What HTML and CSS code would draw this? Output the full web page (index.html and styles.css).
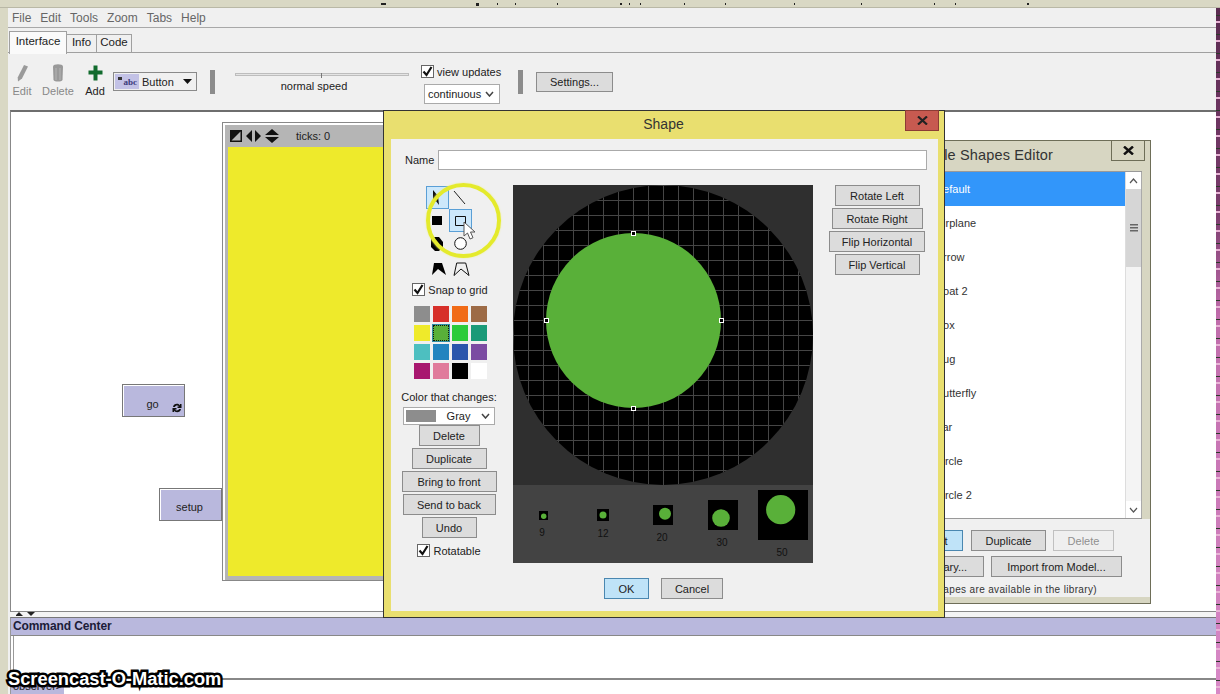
FILE: index.html
```html
<!DOCTYPE html>
<html lang="en">
<head>
    <meta charset="UTF-8">
    <title>Shape</title>
    <link rel="stylesheet" href="styles.css">
</head>
<body>
<div class="app">
    <!-- bottoms of the title bar text, the rest is off screen -->
    <div class="titlebar">
        <svg width="1220" height="8" fill="#222">
            <rect x="381" y="0" width="5" height="2"/><rect x="476" y="0" width="3" height="3"/><rect x="497" y="0" width="1" height="2"/>
            <rect x="515" y="0" width="1" height="2"/><rect x="557" y="0" width="1" height="2"/><rect x="620" y="0" width="2" height="2"/>
            <rect x="629" y="0" width="1" height="2"/><rect x="640" y="0" width="1" height="2"/><rect x="684" y="0" width="1" height="2"/>
            <rect x="725" y="0" width="1" height="2"/><rect x="794" y="0" width="1" height="2"/><rect x="861" y="0" width="1" height="2"/>
            <rect x="934" y="0" width="1" height="2"/><rect x="955" y="0" width="1" height="2"/><rect x="1027" y="0" width="2" height="2"/>
        </svg>
    </div>
    <div class="main">
        <div class="menubar">
            <span>File</span><span>Edit</span><span>Tools</span><span>Zoom</span><span>Tabs</span><span>Help</span>
        </div>
        <div class="tabs">
            <div class="tab active">Interface</div>
            <div class="tab tab-info">Info</div>
            <div class="tab tab-code">Code</div>
        </div>
        <div class="toolbar">
            <div class="tool tool-edit">
                <svg width="14" height="18" viewBox="0 0 14 18"><path d="M9 1l4 1.500-6 12-4 3-.3-4z" fill="#9a9a9a"/></svg>
                <span>Edit</span>
            </div>
            <div class="tool tool-delete">
                <svg width="14" height="18" viewBox="0 0 14 18"><path d="M2 2.500c0-3 10-3 10 0l-.5 13.500c-1 2-8 2-9 0z" fill="#999"/><path d="M5 4v12M9 4v12" stroke="#b5b5b5"/></svg>
                <span>Delete</span>
            </div>
            <div class="tool tool-add">
                <svg width="15" height="18" viewBox="0 0 15 18"><path d="M5.500 1.500h4v5h5v4h-5v6h-4v-6h-5v-4h5z" fill="#116b2d"/></svg>
                <span class="dark">Add</span>
            </div>
            <div class="widget-select">
                <span class="abc"><i>abc</i></span>
                <span class="widget-name">Button</span>
                <svg width="9" height="5"><path d="M0 0h9l-4.500 5z" fill="#111"/></svg>
            </div>
            <div class="separator sep-a"></div>
            <div class="speed">
                <div class="track"><span class="thumb"></span></div>
                <div class="speed-label">normal speed</div>
            </div>
            <div class="updates">
                <label class="check">
                    <span class="box"><svg width="11" height="11" viewBox="0 0 11 11"><path d="M1.500 5.500l3 3.500 5-8" fill="none" stroke="#111" stroke-width="2.200"/></svg></span>
                    view updates
                </label>
                <div class="dropdown continuous">
                    <span>continuous</span>
                    <svg width="9" height="6"><path d="M1 1l3.500 4 3.500-4" fill="none" stroke="#444" stroke-width="1.500"/></svg>
                </div>
            </div>
            <div class="separator sep-b"></div>
            <button class="btn settings">Settings...</button>
        </div>
        <div class="workspace"></div>
        <div class="splitter">
            <svg width="26" height="5"><path d="M3 0l4 4h-8zM11 0h8l-4 4z" fill="#222"/></svg>
        </div>
        <div class="command">
            <div class="command-title">Command Center</div>
            <div class="command-body"></div>
            <div class="command-input"><span class="observer">observer&gt;</span></div>
        </div>
    </div>
    <div class="stripes"></div>

    <div class="nl-button go">
        go
        <svg class="forever" width="10" height="10" viewBox="0 0 10 10"><path d="M1 4c.5-4 6-4 7-1.500V1l1.500 0v4H5.500V3.500h1.500C6 2 3.500 2.300 3 4zM9 6c-.5 4-6 4-7 1.500V9H.5V5h4v1.500H3C4 8 6.500 7.700 7 6z" fill="#111"/></svg>
    </div>
    <div class="nl-button setup">setup</div>

    <div class="world">
        <div class="world-inner">
            <div class="world-head">
                <svg width="54" height="14" viewBox="0 0 54 14" fill="#111">
                    <path d="M0 1h12v12H0z"/><path d="M10.500 2.500v9h-9z" fill="#b5b5b5"/>
                    <path d="M22 1v12l-6-6zM25 1v12l6-6zM42 0l7 6H35zM42 14l7-6H35z"/>
                </svg>
                <span class="ticks">ticks: 0</span>
            </div>
            <div class="world-view"></div>
        </div>
    </div>

    <div class="editor">
        <div class="editor-head">
            <span class="editor-title">Turtle Shapes Editor</span>
            <span class="close plain"><svg width="11" height="9" viewBox="0 0 11 9"><path d="M1 .5l9 8M10 .5l-9 8" stroke="#111" stroke-width="2.400"/></svg></span>
        </div>
        <div class="editor-list">
            <ul class="shape-list">
                <li class="selected">default</li>
                <li>airplane</li>
                <li>arrow</li>
                <li>boat 2</li>
                <li>box</li>
                <li>bug</li>
                <li>butterfly</li>
                <li>car</li>
                <li>circle</li>
                <li>circle 2</li>
            </ul>
            <div class="scrollbar">
                <span class="arrow"><svg width="9" height="6"><path d="M1 5l3.500-4 3.500 4" fill="none" stroke="#555" stroke-width="1.200"/></svg></span>
                <span class="scroll-thumb"><svg width="8" height="8" fill="#666"><path d="M0 0h8v1.500H0zM0 3h8v1.500H0zM0 6h8v1.500H0z"/></svg></span>
                <span class="scroll-space"></span>
                <span class="arrow"><svg width="9" height="6"><path d="M1 1l3.500 4 3.500-4" fill="none" stroke="#555" stroke-width="1.200"/></svg></span>
            </div>
        </div>
        <div class="editor-foot">
            <div class="editor-row row-one">
                <button class="btn primary edit-btn">Edit</button>
                <button class="btn duplicate-btn">Duplicate</button>
                <button class="btn disabled delete-btn">Delete</button>
            </div>
            <div class="editor-row row-two">
                <button class="btn library-btn">Import from Library...</button>
                <button class="btn model-btn">Import from Model...</button>
            </div>
            <div class="editor-note">(Shapes are available in the library)</div>
        </div>
    </div>

    <div class="dialog">
        <div class="dialog-head">
            Shape
            <span class="close red"><svg width="11" height="9" viewBox="0 0 11 9"><path d="M1 .5l9 8M10 .5l-9 8" stroke="#222" stroke-width="2.200"/></svg></span>
        </div>
        <div class="dialog-body">
            <div class="name-row">
                <label>Name</label>
                <input class="name-input" type="text">
            </div>
            <div class="editor-main">
                <div class="left-col">
                    <div class="shape-tools">
                        <span class="shape-tool on"><svg width="21" height="21"><path d="M6 3l5 6 1 9-3-4-3 2z" fill="#111"/></svg></span>
                        <span class="shape-tool"><svg width="21" height="21"><path d="M4 4l11 13" stroke="#222"/></svg></span>
                        <span class="shape-tool"><svg width="21" height="21"><path d="M5 6h10v9H5z" fill="#000"/></svg></span>
                        <span class="shape-tool on"><svg width="21" height="21"><path d="M5.500 6.500h10v9h-10z" fill="none" stroke="#111"/></svg></span>
                        <span class="shape-tool"><svg width="21" height="21"><path d="M4 4h8l4 5v5l-4 4H8l-4-4z" fill="#000"/></svg></span>
                        <span class="shape-tool"><svg width="21" height="21"><circle cx="10.500" cy="10.500" r="5.800" fill="#fff" stroke="#111"/></svg></span>
                        <span class="shape-tool"><svg width="21" height="21"><path d="M7 6h8l4 12-8-6-6 6z" fill="#000"/></svg></span>
                        <span class="shape-tool"><svg width="21" height="21"><path d="M6.700 6h9l3.300 12.500-8-6.500-7 6.500z" fill="none" stroke="#111"/></svg></span>
                    </div>
                    <label class="check snap">
                        <span class="box"><svg width="11" height="11" viewBox="0 0 11 11"><path d="M1.500 5.500l3 3.500 5-8" fill="none" stroke="#111" stroke-width="2.200"/></svg></span>
                        Snap to grid
                    </label>
                    <div class="palette">
                        <span class="c-gray"></span><span class="c-red"></span><span class="c-orange"></span><span class="c-brown"></span>
                        <span class="c-yellow"></span><span class="c-green picked"></span><span class="c-lime"></span><span class="c-turq"></span>
                        <span class="c-cyan"></span><span class="c-sky"></span><span class="c-blue"></span><span class="c-violet"></span>
                        <span class="c-magenta"></span><span class="c-pink"></span><span class="c-black"></span><span class="c-white"></span>
                    </div>
                    <div class="change-label">Color that changes:</div>
                    <div class="dropdown color-select">
                        <span class="swatch"></span>
                        <span class="color-name">Gray</span>
                        <svg width="9" height="6"><path d="M1 1l3.500 4 3.500-4" fill="none" stroke="#444" stroke-width="1.500"/></svg>
                    </div>
                    <div class="action-stack">
                        <button class="btn w-delete">Delete</button>
                        <button class="btn w-duplicate">Duplicate</button>
                        <button class="btn w-front">Bring to front</button>
                        <button class="btn w-back">Send to back</button>
                        <button class="btn w-undo">Undo</button>
                    </div>
                    <label class="check rotatable">
                        <span class="box"><svg width="11" height="11" viewBox="0 0 11 11"><path d="M1.500 5.500l3 3.500 5-8" fill="none" stroke="#111" stroke-width="2.200"/></svg></span>
                        Rotatable
                    </label>
                </div>
                <svg class="drawing" width="300" height="378" viewBox="0 0 300 378">
                    <defs>
                        <clipPath id="disc"><circle cx="150" cy="150" r="150"/></clipPath>
                        <pattern id="grid" width="15" height="15" patternUnits="userSpaceOnUse">
                            <path d="M.5 0v15M0 .5h15" stroke="#454545" fill="none"/>
                        </pattern>
                    </defs>
                    <rect width="300" height="300" fill="#2f2f2f"/>
                    <circle cx="150" cy="150" r="150" fill="#000"/>
                    <rect width="300" height="300" fill="url(#grid)" clip-path="url(#disc)"/>
                    <circle cx="120.500" cy="135.500" r="87.500" fill="#59b039"/>
                    <g fill="#000" stroke="#fff" stroke-width="1">
                        <rect x="118.500" y="46.500" width="4" height="4"/>
                        <rect x="31.500" y="133.500" width="4" height="4"/>
                        <rect x="206.500" y="133.500" width="4" height="4"/>
                        <rect x="118.500" y="221.500" width="4" height="4"/>
                    </g>
                    <rect y="300" width="300" height="78" fill="#434343"/>
                    <rect x="26" y="326" width="9" height="9" fill="#000"/><circle cx="30.700" cy="331.300" r="2.700" fill="#59b039"/>
                    <rect x="84" y="324" width="12" height="12" fill="#000"/><circle cx="90" cy="330" r="3.500" fill="#59b039"/>
                    <rect x="140" y="320" width="20" height="20" fill="#000"/><circle cx="152" cy="328.700" r="6" fill="#59b039"/>
                    <rect x="195" y="315" width="30" height="30" fill="#000"/><circle cx="208" cy="333" r="8.800" fill="#59b039"/>
                    <rect x="245" y="305" width="50" height="50" fill="#000"/><circle cx="267.700" cy="324.700" r="14.600" fill="#59b039"/>
                    <g class="size-labels" text-anchor="middle">
                        <text x="29" y="351">9</text>
                        <text x="90" y="352">12</text>
                        <text x="149" y="356">20</text>
                        <text x="209" y="361">30</text>
                        <text x="269" y="371">50</text>
                    </g>
                </svg>
                <div class="right-col">
                    <button class="btn w-rot-left">Rotate Left</button>
                    <button class="btn w-rot-right">Rotate Right</button>
                    <button class="btn w-flip-h">Flip Horizontal</button>
                    <button class="btn w-flip-v">Flip Vertical</button>
                </div>
            </div>
            <div class="dialog-foot">
                <button class="btn primary ok">OK</button>
                <button class="btn cancel">Cancel</button>
            </div>
        </div>
        <div class="spotlight"></div>
        <svg class="cursor" width="14" height="20" viewBox="0 0 14 20"><path d="M1 1v14l3.500-3 2.500 6 3-1.300-2.500-5.700H12z" fill="#fff" stroke="#555"/></svg>
    </div>

    <div class="watermark">Screencast-O-Matic.com</div>
</div>
</body>
</html>
```

FILE: styles.css
```css
* {
    box-sizing: border-box;
    margin: 0;
    padding: 0;
}

body {
    font-family: "Liberation Sans", Arial, sans-serif;
    font-size: 12px;
    color: #222;
    background-color: #d9d8c4;
}

.app {
    position: relative;
    width: 1220px;
    height: 694px;
    overflow: hidden;
    display: grid;
    grid-template-columns: 8px 1fr 4px;
    grid-template-rows: 8px 1fr;
    background-color: #d9d8c4;
}

.titlebar {
    grid-column: 1 / 4;
    height: 8px;
    border-bottom: 1px solid #b9b8a6;
}

.main {
    grid-column: 2;
    grid-row: 2;
    display: flex;
    flex-direction: column;
    min-height: 0;
    background-color: #f0f0f0;
}

.stripes {
    grid-column: 3;
    grid-row: 2;
    background-color: #7c3d6e;
    background-image:
        repeating-linear-gradient(180deg, transparent 0 7px, #2c3a2a 7px 8px, transparent 8px 13px, #e9b3d6 13px 15px, transparent 15px 19px),
        linear-gradient(180deg, #5a2b50 0, #7c3d6e 30%, #c06cab 45%, #d889c6 100%);
}

/* menu and tabs */
.menubar {
    height: 20px;
    display: flex;
    align-items: center;
    gap: 9px;
    padding-left: 4px;
    color: #666;
    border-bottom: 1px solid #a8a8a8;
}

.tabs {
    height: 25px;
    display: flex;
    align-items: flex-end;
    padding-left: 1px;
    border-bottom: 1px solid #a0a0a0;
    font-size: 11.500px;
}

.tab {
    height: 19px;
    padding-top: 1px;
    margin-bottom: -1px;
    text-align: center;
    background-color: #f0f0f0;
    border: 1px solid #a0a0a0;
    border-left: 0;
}

.tab-info {
    width: 30px;
}

.tab-code {
    width: 35px;
}

.tab.active {
    height: 23px;
    width: 58px;
    padding-top: 3px;
    margin-bottom: -2px;
    background-color: #fafafa;
    border-left: 1px solid #a0a0a0;
    border-bottom: 0;
    position: relative;
}

/* toolbar */
.toolbar {
    height: 57px;
    display: flex;
    align-items: flex-start;
    flex-shrink: 0;
    font-size: 11px;
}

.tool {
    display: flex;
    flex-direction: column;
    align-items: center;
    color: #888;
    margin-top: 11px;
    line-height: 14px;
}

.tool svg {
    margin-bottom: 2px;
}

.tool .dark {
    color: #222;
}

.tool-edit {
    width: 20px;
    margin-left: 4px;
}

.tool-delete {
    width: 32px;
    margin-left: 10px;
}

.tool-add {
    width: 20px;
    margin-left: 11px;
}

.widget-select {
    width: 84px;
    height: 19px;
    margin: 19px 0 0 8px;
    display: flex;
    align-items: center;
    border: 1px solid #8a8a8a;
    background-color: #f0f0f0;
    padding: 1px;
}

.abc {
    width: 24px;
    height: 15px;
    background-color: #c3c2e6;
    text-align: right;
    padding: 3px 2px 0 0;
    position: relative;
}

.abc::before {
    content: "";
    position: absolute;
    left: 3px;
    top: 3px;
    width: 4px;
    height: 3px;
    background-color: #333;
}

.abc i {
    display: block;
    font: bold 9px/11px "Liberation Serif", serif;
    color: #3b3b7a;
}

.widget-name {
    flex: 1;
    padding-left: 3px;
}

.widget-select svg {
    margin-right: 3px;
}

.separator {
    width: 5px;
    height: 24px;
    margin-top: 17px;
    background-color: #8c8c8c;
}

.sep-a {
    margin-left: 13px;
}

.sep-b {
    margin-left: 17px;
}

.speed {
    width: 174px;
    margin: 20px 0 0 20px;
}

.track {
    position: relative;
    height: 3px;
    background-color: #e4e4e4;
    border: 1px solid #bdbdbd;
}

.thumb {
    position: absolute;
    left: 85px;
    top: -1px;
    width: 1px;
    height: 5px;
    background-color: #777;
}

.speed-label {
    margin-top: 2px;
    padding-right: 16px;
    text-align: center;
    line-height: 16px;
}

.updates {
    width: 80px;
    margin: 11px 0 0 12px;
}

.check {
    display: flex;
    align-items: center;
    gap: 3px;
    height: 15px;
    white-space: nowrap;
}

.box {
    width: 13px;
    height: 13px;
    flex-shrink: 0;
    display: flex;
    align-items: center;
    justify-content: center;
    background-color: #fff;
    border: 1px solid #666;
}

.dropdown {
    display: flex;
    align-items: center;
    background-color: #fff;
    border: 1px solid #aaa;
}

.continuous {
    width: 76px;
    height: 20px;
    margin: 5px 0 0 3px;
    padding: 0 5px 0 3px;
    justify-content: space-between;
}

.btn {
    display: block;
    font: 11px "Liberation Sans", Arial, sans-serif;
    color: #222;
    background-color: #dcdcdc;
    border: 1px solid #8c8c8c;
    white-space: nowrap;
}

.btn.primary {
    background-color: #bfe3f8;
    border-color: #4a87b0;
}

.btn.disabled {
    background-color: #efefef;
    border-color: #c0c0c0;
    color: #8f8f8f;
}

.settings {
    width: 77px;
    height: 20px;
    margin: 19px 0 0 13px;
}

/* interface area */
.workspace {
    flex: 1;
    margin-left: 2px;
    background-color: #fff;
    border: 1px solid #888;
    border-top: 2px solid #6e6e6e;
    border-right: 0;
}

.splitter {
    height: 5px;
    margin-left: 2px;
    background-color: #f4f4f4;
    padding-left: 6px;
    line-height: 0;
}

.command {
    height: 77px;
    margin-left: 2px;
    background-color: #fff;
    border-top: 1px solid #777;
    border-left: 1px solid #999;
}

.command-title {
    height: 18px;
    padding-left: 2px;
    font-weight: bold;
    letter-spacing: -.1px;
    line-height: 17px;
    color: #1c1c38;
    background-color: #b9b8dd;
    border-bottom: 1px solid #888;
}

.command-body {
    height: 44px;
    margin-left: 2px;
    border-left: 1px solid #999;
    border-bottom: 2px solid #888;
}

.command-input {
    height: 14px;
}

.observer {
    display: block;
    width: 53px;
    height: 14px;
    font-size: 11px;
    background-color: #b9b8dd;
    padding-left: 2px;
}

/* widgets on the interface */
.nl-button {
    position: absolute;
    width: 63px;
    height: 33px;
    display: flex;
    align-items: center;
    justify-content: center;
    font-size: 11px;
    padding-top: 6px;
    background-color: #b9b8dd;
    border: 1px solid #777;
    box-shadow: inset 1px 1px 0 #fff;
}

.go {
    left: 122px;
    top: 384px;
    padding-right: 2px;
}

.forever {
    position: absolute;
    right: 2px;
    bottom: 3px;
}

.setup {
    left: 159px;
    top: 488px;
    padding-top: 4px;
    padding-right: 2px;
}

.world {
    position: absolute;
    left: 222px;
    top: 122px;
    width: 200px;
    height: 459px;
    background-color: #fff;
    border: 1px solid #888;
    padding: 2px 0 0 2px;
}

.world-inner {
    height: 100%;
    background-color: #b5b5b5;
    padding: 0 0 4px 3px;
    display: flex;
    flex-direction: column;
}

.world-head {
    height: 22px;
    display: flex;
    align-items: center;
    padding-left: 2px;
}

.ticks {
    margin-left: 12px;
    font-size: 11px;
}

.world-view {
    flex: 1;
    background-color: #eeea2b;
}

/* shapes editor behind the dialog */
.editor {
    position: absolute;
    left: 800px;
    top: 140px;
    width: 351px;
    height: 464px;
    display: flex;
    flex-direction: column;
    background-color: #d7d6c2;
    border: 1px solid #6e6e58;
    padding-bottom: 6px;
}

.editor-head {
    height: 30px;
    display: flex;
    justify-content: flex-end;
    align-items: flex-start;
    padding-right: 5px;
    flex-shrink: 0;
}

.editor-title {
    margin: 5px 58px 0 0;
    font-size: 14.500px;
    letter-spacing: .15px;
    line-height: 19px;
    color: #333;
}

.close {
    width: 34px;
    height: 21px;
    display: flex;
    align-items: center;
    justify-content: center;
}

.close.plain {
    margin-top: -1px;
    border: 1px solid #6e6e58;
}

.editor-list {
    height: 348px;
    display: flex;
    margin-right: 8px;
    background-color: #fff;
    border-top: 1px solid #999;
    border-bottom: 1px solid #999;
    flex-shrink: 0;
}

.shape-list {
    flex: 1;
    list-style: none;
    font-size: 11px;
}

.shape-list li {
    height: 34px;
    line-height: 34px;
    padding-left: 136px;
    color: #333;
}

.shape-list .selected {
    background-color: #3296fa;
    color: #fff;
}

.scrollbar {
    width: 17px;
    display: flex;
    flex-direction: column;
    border-left: 1px solid #ddd;
    border-right: 1px solid #aaa;
}

.arrow {
    height: 17px;
    display: flex;
    align-items: center;
    justify-content: center;
    background-color: #fff;
    flex-shrink: 0;
}

.scroll-thumb {
    height: 78px;
    display: flex;
    align-items: center;
    justify-content: center;
    background-color: #d6d6d6;
}

.scroll-space {
    flex: 1;
    background-color: #f4f4f4;
}

.editor-foot {
    flex: 1;
    background-color: #f0f0f0;
}

.editor-row {
    display: flex;
    justify-content: flex-end;
    gap: 7px;
}

.row-one {
    padding: 11px 36px 0 0;
}

.row-one .btn {
    height: 21px;
}

.edit-btn {
    width: 50px;
    margin-right: 1px;
}

.duplicate-btn {
    width: 75px;
}

.delete-btn {
    width: 61px;
}

.row-two {
    padding: 5px 28px 0 0;
}

.row-two .btn {
    height: 21px;
}

.library-btn {
    width: 130px;
    padding-right: 5px;
}

.model-btn {
    width: 131px;
}

.editor-note {
    margin-top: 7px;
    padding-right: 53px;
    text-align: right;
    font-size: 10px;
    letter-spacing: .35px;
    color: #333;
}

/* shape dialog */
.dialog {
    position: absolute;
    left: 383px;
    top: 110px;
    width: 562px;
    height: 508px;
    display: flex;
    flex-direction: column;
    padding: 0 6px 6px 7px;
    background-color: #e9df6f;
    border: 1px solid #333;
}

.dialog-head {
    height: 28px;
    flex-shrink: 0;
    padding-right: 2px;
    text-align: center;
    font-size: 14px;
    line-height: 27px;
    color: #333;
}

.close.red {
    position: absolute;
    right: 5px;
    top: -1px;
    background-color: #c75a50;
    border: 1px solid #8c3c34;
}

.dialog-body {
    flex: 1;
    background-color: #f0f0f0;
    padding-top: 11px;
}

.name-row {
    display: flex;
    align-items: center;
    padding: 0 11px 0 14px;
    gap: 4px;
}

.name-row label {
    font-size: 11px;
}

.name-input {
    flex: 1;
    height: 20px;
    background-color: #fff;
    border: 1px solid #aaa;
}

.editor-main {
    display: flex;
    align-items: flex-start;
    margin-top: 15px;
}

.left-col {
    width: 116px;
    margin-right: 6px;
    display: flex;
    flex-direction: column;
    align-items: center;
    padding-top: 1px;
}

.shape-tools {
    display: grid;
    grid-template-columns: 23px 23px;
    grid-template-rows: 23px 23px 23px 24px;
}

.shape-tool {
    display: flex;
    align-items: center;
    justify-content: center;
    border: 1px solid transparent;
}

.shape-tool.on {
    background-color: #cde8fb;
    border-color: #5a9fd6;
}

.snap {
    margin: 3px 0 0 2px;
    font-size: 11px;
}

.palette {
    display: grid;
    grid-template-columns: repeat(4, 16px);
    grid-auto-rows: 16px;
    gap: 3px;
    margin: 9px 0 0 2px;
}

.c-gray { background-color: #8d8d8d; }
.c-red { background-color: #d7302a; }
.c-orange { background-color: #f16b17; }
.c-brown { background-color: #9d6b46; }
.c-yellow { background-color: #efea2a; }
.c-green { background-color: #59b039; }
.c-lime { background-color: #2ccb3a; }
.c-turq { background-color: #1a9a78; }
.c-cyan { background-color: #4dbfc0; }
.c-sky { background-color: #2384bf; }
.c-blue { background-color: #2a56ac; }
.c-violet { background-color: #7b4ba2; }
.c-magenta { background-color: #a8176f; }
.c-pink { background-color: #e07a9b; }
.c-black { background-color: #000; }
.c-white { background-color: #fff; }

.picked {
    border: 1px dotted #111;
    outline: 1px solid #2f8fa8;
}

.change-label {
    margin-top: 11px;
    font-size: 11px;
    line-height: 14px;
}

.color-select {
    width: 92px;
    height: 18px;
    margin-top: 3px;
    padding: 0 4px 0 2px;
}

.swatch {
    width: 30px;
    height: 12px;
    background-color: #8d8d8d;
}

.color-name {
    flex: 1;
    text-align: center;
    font-size: 11px;
}

.action-stack {
    display: flex;
    flex-direction: column;
    align-items: center;
    gap: 2px;
}

.action-stack .btn,
.right-col .btn {
    height: 21px;
}

.w-delete { width: 61px; }
.w-duplicate { width: 75px; }
.w-front { width: 95px; }
.w-back { width: 93px; }
.w-undo { width: 55px; }

.rotatable {
    margin-top: 5px;
    font-size: 11px;
}

.drawing {
    flex-shrink: 0;
}

.size-labels {
    font: 10px "Liberation Sans", Arial, sans-serif;
    fill: #111;
}

.right-col {
    flex: 1;
    display: flex;
    flex-direction: column;
    align-items: center;
    gap: 2px;
    padding-left: 3px;
}

.w-rot-left { width: 85px; }
.w-rot-right { width: 91px; }
.w-flip-h { width: 96px; }
.w-flip-v { width: 85px; }

.dialog-foot {
    display: flex;
    justify-content: center;
    gap: 12px;
    margin-top: 15px;
    padding-right: 2px;
}

.dialog-foot .btn {
    height: 21px;
}

.ok {
    width: 45px;
}

.cancel {
    width: 62px;
}

.spotlight {
    position: absolute;
    left: 42px;
    top: 72px;
    width: 75px;
    height: 75px;
    border: 4px solid #e4ea2c;
    border-radius: 50%;
    box-shadow: 0 0 2px #eef08a;
}

.cursor {
    position: absolute;
    left: 79px;
    top: 110px;
}

.watermark {
    position: absolute;
    left: 8px;
    top: 668px;
    font-size: 18.300px;
    font-weight: bold;
    line-height: 22px;
    color: #fff;
    -webkit-text-stroke: 5px #000;
    paint-order: stroke fill;
}
```
